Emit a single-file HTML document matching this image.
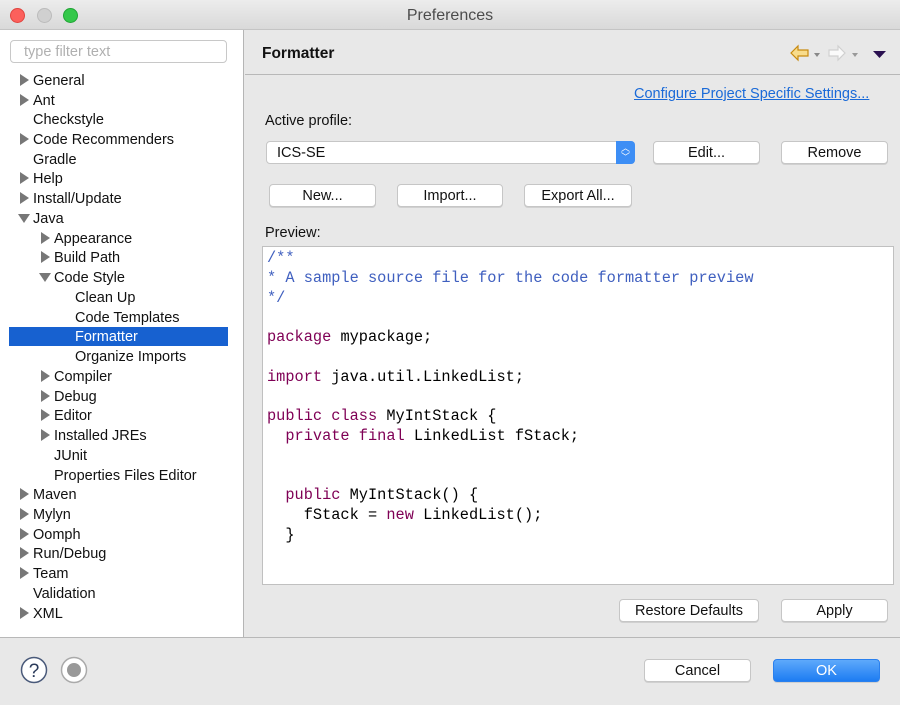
<!DOCTYPE html>
<html><head><style>
*{margin:0;padding:0;box-sizing:border-box}
body{width:900px;height:705px;background:#e8e8e8;font-family:"Liberation Sans",sans-serif;font-size:14.5px;color:#111;position:relative;overflow:hidden}
.abs{position:absolute}
.title{top:0;left:0;width:900px;height:30px;background:linear-gradient(#ececec,#d9d9d9);border-bottom:1px solid #c4c4c4;text-align:center;line-height:32px;font-size:16px;color:#4c4c4c}
.dot{top:8px;width:15px;height:15px;border-radius:50%}
.left{top:30px;left:0;width:244px;height:607px;background:#fff;border-right:1px solid #b5b5b5}
.filter{top:40px;left:10px;width:217px;height:23px;border:1px solid #c8c8c8;border-radius:4px;color:#b0b0b0;padding-left:13px;line-height:23px;font-size:14.5px;background:#fff}
.row{position:absolute;height:19.7px;line-height:19.7px;white-space:nowrap}
.tri{position:absolute;left:0;width:0;height:0}
.tr{border-left:9px solid #777;border-top:6px solid transparent;border-bottom:6px solid transparent;top:2px}
.td{border-top:9px solid #777;border-left:6px solid transparent;border-right:6px solid transparent;top:4px}
.sel{background:#1761d0;color:#fff}
.btn{position:absolute;height:23px;background:#fff;border:1px solid #c6c6c6;border-radius:4px;text-align:center;line-height:23px;font-size:14.5px;box-shadow:0 1px 0 #d0d0d0}
.code{top:246px;left:262px;width:632px;height:339px;background:#fff;border:1px solid #c0c0c0;font-family:"Liberation Mono",monospace;font-size:15.3px;line-height:19.75px;padding:2px 0 0 4px;white-space:pre;color:#000}
.c{color:#3f5fbf}.k{color:#7f0055}
</style></head><body>
<div class="abs" style="top:0;left:0;width:900px;height:3px;background:#f6f3e8"></div>
<div class="abs title">Preferences</div>
<div class="abs dot" style="left:10px;background:#fc605c;border:1px solid #e0443e"></div>
<div class="abs dot" style="left:37px;background:#d0d0d0;border:1px solid #bbb"></div>
<div class="abs dot" style="left:63px;background:#34c84a;border:1px solid #20a435"></div>
<div class="abs left"></div>
<div class="abs filter">type filter text</div>

<div class="row" style="top:72px;left:20px"><span class="tri tr"></span><span style="margin-left:13px">General</span></div>
<div class="row" style="top:92px;left:20px"><span class="tri tr"></span><span style="margin-left:13px">Ant</span></div>
<div class="row" style="top:111px;left:33px">Checkstyle</div>
<div class="row" style="top:131px;left:20px"><span class="tri tr"></span><span style="margin-left:13px">Code Recommenders</span></div>
<div class="row" style="top:151px;left:33px">Gradle</div>
<div class="row" style="top:170px;left:20px"><span class="tri tr"></span><span style="margin-left:13px">Help</span></div>
<div class="row" style="top:190px;left:20px"><span class="tri tr"></span><span style="margin-left:13px">Install/Update</span></div>
<div class="row" style="top:210px;left:18px"><span class="tri td"></span><span style="margin-left:15px">Java</span></div>
<div class="row" style="top:230px;left:41px"><span class="tri tr"></span><span style="margin-left:13px">Appearance</span></div>
<div class="row" style="top:249px;left:41px"><span class="tri tr"></span><span style="margin-left:13px">Build Path</span></div>
<div class="row" style="top:269px;left:39px"><span class="tri td"></span><span style="margin-left:15px">Code Style</span></div>
<div class="row" style="top:289px;left:75px">Clean Up</div>
<div class="row" style="top:309px;left:75px">Code Templates</div>
<div class="row sel" style="top:327px;left:9px;width:219px;height:19px;line-height:21px;padding-left:66px">Formatter</div>
<div class="row" style="top:348px;left:75px">Organize Imports</div>
<div class="row" style="top:368px;left:41px"><span class="tri tr"></span><span style="margin-left:13px">Compiler</span></div>
<div class="row" style="top:388px;left:41px"><span class="tri tr"></span><span style="margin-left:13px">Debug</span></div>
<div class="row" style="top:407px;left:41px"><span class="tri tr"></span><span style="margin-left:13px">Editor</span></div>
<div class="row" style="top:427px;left:41px"><span class="tri tr"></span><span style="margin-left:13px">Installed JREs</span></div>
<div class="row" style="top:447px;left:54px">JUnit</div>
<div class="row" style="top:467px;left:54px">Properties Files Editor</div>
<div class="row" style="top:486px;left:20px"><span class="tri tr"></span><span style="margin-left:13px">Maven</span></div>
<div class="row" style="top:506px;left:20px"><span class="tri tr"></span><span style="margin-left:13px">Mylyn</span></div>
<div class="row" style="top:526px;left:20px"><span class="tri tr"></span><span style="margin-left:13px">Oomph</span></div>
<div class="row" style="top:545px;left:20px"><span class="tri tr"></span><span style="margin-left:13px">Run/Debug</span></div>
<div class="row" style="top:565px;left:20px"><span class="tri tr"></span><span style="margin-left:13px">Team</span></div>
<div class="row" style="top:585px;left:33px">Validation</div>
<div class="row" style="top:605px;left:20px"><span class="tri tr"></span><span style="margin-left:13px">XML</span></div>

<div class="abs" style="top:45px;left:262px;font-weight:bold;font-size:15.5px">Formatter</div>
<svg class="abs" style="top:44px;left:788px" width="100" height="20">
<path d="M3 9 L10 2 L10 6 L20 6 L20 12 L10 12 L10 16 Z" fill="#f8dc8c" stroke="#c88a10" stroke-width="1.2"/>
<path d="M26 9 l6 0 l-3 4z" fill="#888"/>
<path d="M57 9 L50 2 L50 6 L41 6 L41 12 L50 12 L50 16 Z" fill="#fafafa" stroke="#d0d0d0" stroke-width="1.2"/>
<path d="M64 9 l6 0 l-3 4z" fill="#999"/>
<path d="M85 7 l13 0 l-6.5 7z" fill="#2a1050"/>
</svg>
<div class="abs" style="top:74px;left:245px;width:655px;height:1px;background:#b8b8b8"></div>
<div class="abs" style="top:86px;left:634px;color:#1a6ad8;text-decoration:underline;font-size:14.5px">Configure Project Specific Settings...</div>
<div class="abs" style="top:113px;left:265px">Active profile:</div>
<div class="abs" style="top:141px;left:266px;width:369px;height:23px;background:#fff;border:1px solid #c6c6c6;border-radius:4px;padding-left:10px;line-height:23px">ICS-SE</div>
<div class="abs" style="top:141px;left:616px;width:19px;height:23px;background:#3d8ef5;border-radius:0 4px 4px 0;color:#fff;font-size:9px;line-height:9px;text-align:center;padding-top:3px">︿<br>﹀</div>
<div class="btn" style="top:141px;left:653px;width:107px">Edit...</div>
<div class="btn" style="top:141px;left:781px;width:107px">Remove</div>
<div class="btn" style="top:184px;left:269px;width:107px">New...</div>
<div class="btn" style="top:184px;left:397px;width:106px">Import...</div>
<div class="btn" style="top:184px;left:524px;width:108px">Export All...</div>
<div class="abs" style="top:225px;left:265px">Preview:</div>
<div class="abs code"><span class="c">/**
* A sample source file for the code formatter preview
*/</span>

<span class="k">package</span> mypackage;

<span class="k">import</span> java.util.LinkedList;

<span class="k">public class</span> MyIntStack {
  <span class="k">private final</span> LinkedList fStack;


  <span class="k">public</span> MyIntStack() {
    fStack = <span class="k">new</span> LinkedList();
  }</div>
<div class="btn" style="top:599px;left:619px;width:140px">Restore Defaults</div>
<div class="btn" style="top:599px;left:781px;width:107px">Apply</div>
<div class="abs" style="top:637px;left:0;width:900px;height:1px;background:#b8b8b8"></div>
<svg class="abs" style="top:656px;left:20px" width="70" height="30">
<circle cx="14" cy="14" r="12.5" fill="#fff" stroke="#4a5a7a" stroke-width="1.5"/>
<text x="14" y="21" text-anchor="middle" font-family="Liberation Sans" font-size="19" fill="#2a3a5a">?</text>
<circle cx="54" cy="14" r="12.5" fill="#fff" stroke="#aaa" stroke-width="1.5"/>
<circle cx="54" cy="14" r="7" fill="#999"/>
</svg>
<div class="btn" style="top:659px;left:644px;width:107px">Cancel</div>
<div class="btn" style="top:659px;left:773px;width:107px;background:linear-gradient(#5ea9fb,#1d7cf2);border-color:#2a80ee;color:#fff">OK</div>
</body></html>
